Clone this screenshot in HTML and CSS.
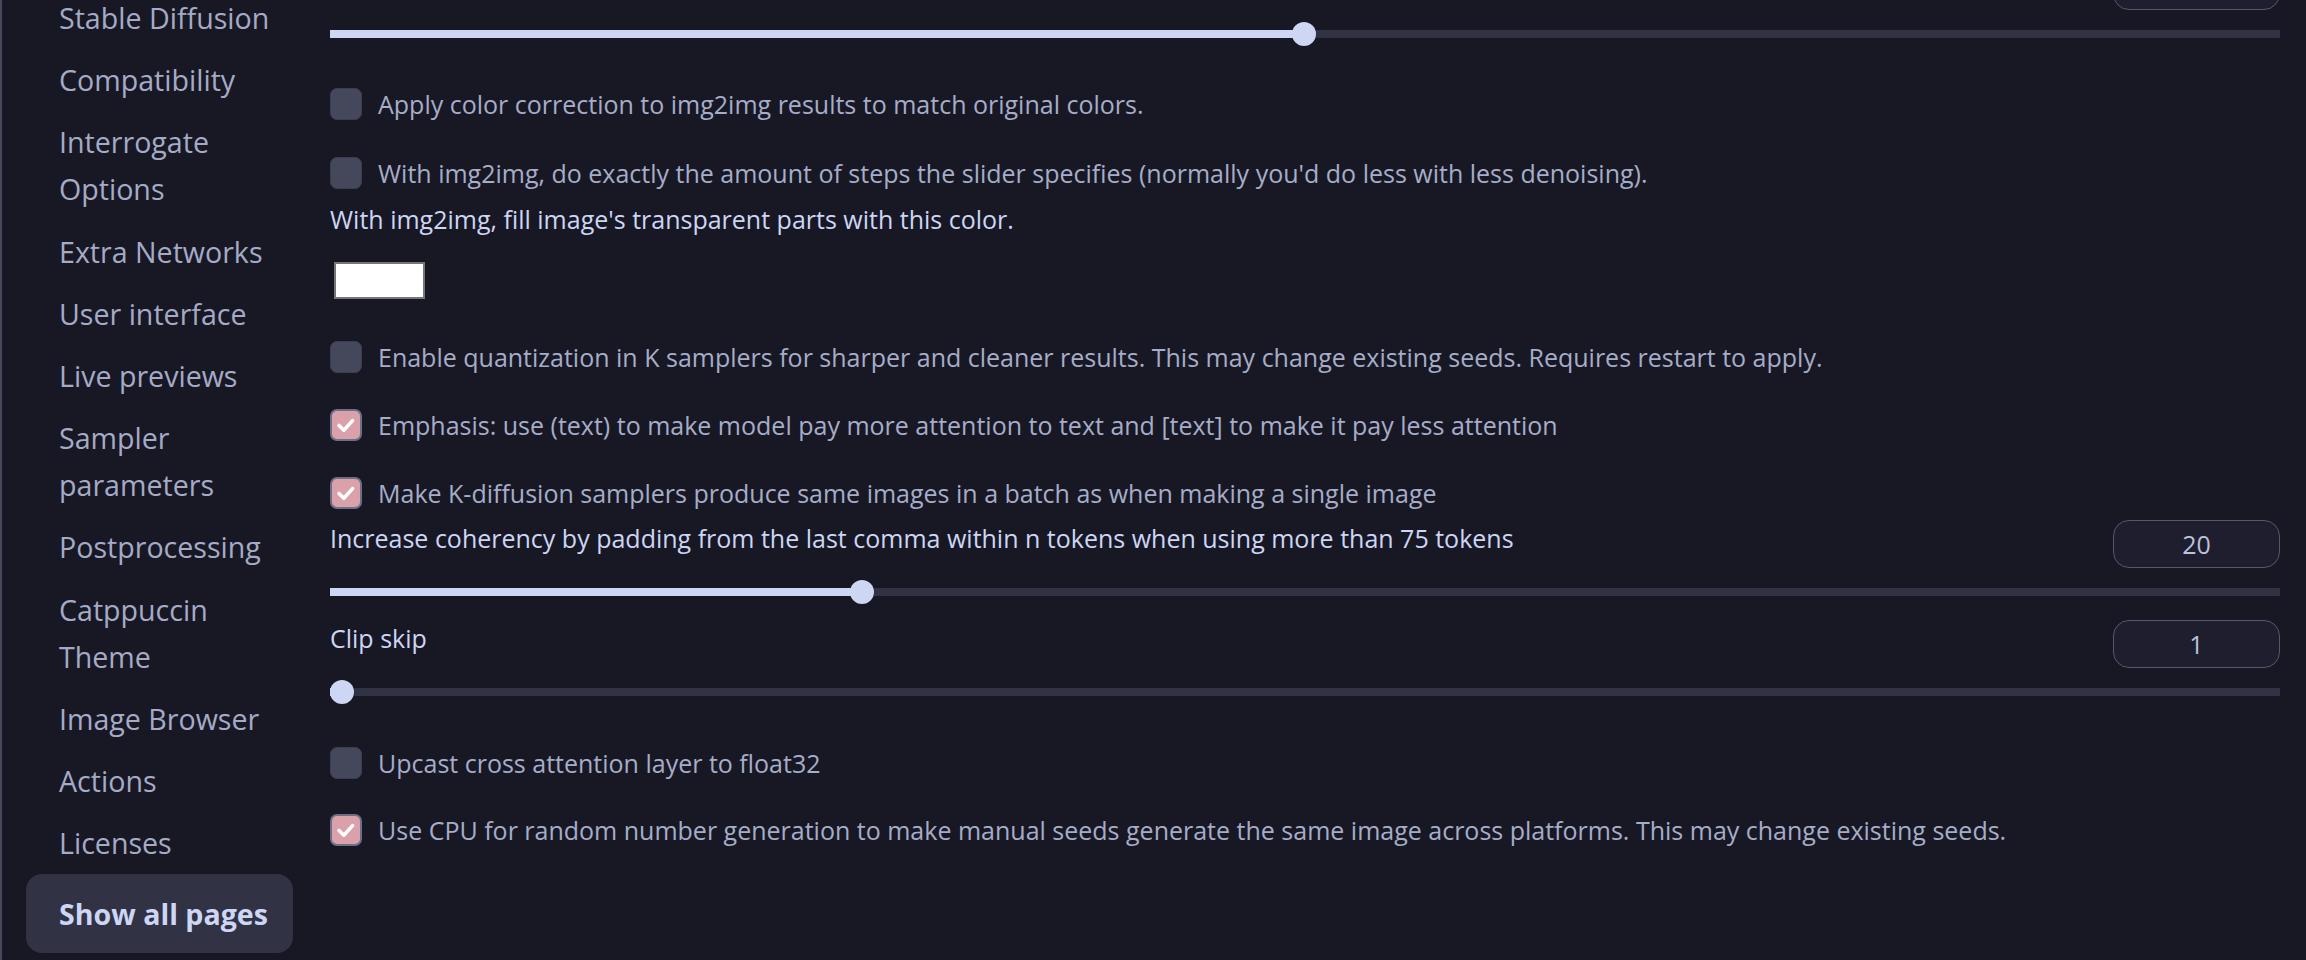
FILE: index.html
```html
<!DOCTYPE html>
<html lang="en">
<head>
<meta charset="utf-8">
<title>Settings</title>
<link rel="stylesheet" href="styles.css">
</head>
<body>
<div class="app">
  <nav class="sidebar">
    <ul class="nav-list">
      <li class="nav-item">Stable Diffusion</li>
      <li class="nav-item">Compatibility</li>
      <li class="nav-item">Interrogate Options</li>
      <li class="nav-item">Extra Networks</li>
      <li class="nav-item">User interface</li>
      <li class="nav-item">Live previews</li>
      <li class="nav-item">Sampler parameters</li>
      <li class="nav-item">Postprocessing</li>
      <li class="nav-item">Catppuccin Theme</li>
      <li class="nav-item">Image Browser</li>
      <li class="nav-item">Actions</li>
      <li class="nav-item">Licenses</li>
      <li class="nav-item nav-active">Show all pages</li>
    </ul>
  </nav>

  <main class="main">
    <div class="slider-block first">
      <div class="slider-head">
        <span class="label"></span>
        <div class="num-input"></div>
      </div>
      <div class="track"><div class="fill" style="width: 974px"></div><div class="thumb" style="left: 962px"></div></div>
    </div>

    <label class="check-row row-1"><span class="box"></span><span class="check-text">Apply color correction to img2img results to match original colors.</span></label>
    <label class="check-row row-2"><span class="box"></span><span class="check-text">With img2img, do exactly the amount of steps the slider specifies (normally you'd do less with less denoising).</span></label>

    <div class="label field-label">With img2img, fill image's transparent parts with this color.</div>
    <div class="swatch"></div>

    <label class="check-row row-3"><span class="box"></span><span class="check-text">Enable quantization in K samplers for sharper and cleaner results. This may change existing seeds. Requires restart to apply.</span></label>
    <label class="check-row row-n"><span class="box checked"><svg viewBox="0 0 32 32" class="tick"><path d="M8 16.5 L13.5 22 L23.5 11"/></svg></span><span class="check-text">Emphasis: use (text) to make model pay more attention to text and [text] to make it pay less attention</span></label>
    <label class="check-row row-n"><span class="box checked"><svg viewBox="0 0 32 32" class="tick"><path d="M8 16.5 L13.5 22 L23.5 11"/></svg></span><span class="check-text">Make K-diffusion samplers produce same images in a batch as when making a single image</span></label>

    <div class="slider-block s2">
      <div class="slider-head">
        <span class="label">Increase coherency by padding from the last comma within n tokens when using more than 75 tokens</span>
        <div class="num-input">20</div>
      </div>
      <div class="track"><div class="fill" style="width: 532px"></div><div class="thumb" style="left: 520px"></div></div>
    </div>

    <div class="slider-block s3">
      <div class="slider-head">
        <span class="label">Clip skip</span>
        <div class="num-input">1</div>
      </div>
      <div class="track"><div class="fill" style="width: 12px"></div><div class="thumb" style="left: 0px"></div></div>
    </div>

    <label class="check-row row-6"><span class="box"></span><span class="check-text">Upcast cross attention layer to float32</span></label>
    <label class="check-row row-7"><span class="box checked"><svg viewBox="0 0 32 32" class="tick"><path d="M8 16.5 L13.5 22 L23.5 11"/></svg></span><span class="check-text">Use CPU for random number generation to make manual seeds generate the same image across platforms. This may change existing seeds.</span></label>
  </main>
</div>
</body>
</html>
```

FILE: styles.css
```css
* { box-sizing: border-box; }

html, body {
  margin: 0;
  padding: 0;
  height: 960px;
  overflow: hidden;
  background: #181825;
}

body {
  font-family: "Open Sans", "Noto Sans", sans-serif;
  color: #a6adc8;
}

.app {
  display: flex;
  width: 2306px;
  height: 960px;
}

/* Sidebar */
.sidebar {
  width: 330px;
  flex: none;
  border-left: 2px solid #45475a;
  padding-left: 24px;
}

.nav-list {
  list-style: none;
  margin: -13.5px 0 0 0;
  padding: 0;
  width: 267px;
}

.nav-item {
  font-size: 28.6px;
  line-height: 47px;
  padding: 7.6px 8px 7.6px 33px;
  color: #a5abc6;
}

.nav-active {
  padding-top: 16px;
  padding-bottom: 16px;
  background: #313244;
  border-radius: 16px;
  font-weight: 700;
  color: #cdd6f4;
}

/* Main */
.main {
  width: 1950px;
  flex: none;
  display: flex;
  flex-direction: column;
  margin-top: -38px;
}

.label {
  font-size: 25px;
  color: #cdd6f4;
  line-height: 36px;
}

.slider-block {
  display: flex;
  flex-direction: column;
  gap: 12px;
}

.slider-block.s2 { margin-top: 11px; }
.slider-block.s3 { margin-top: 16px; }

.slider-head {
  display: flex;
  justify-content: space-between;
  align-items: flex-start;
  height: 48px;
}

.num-input {
  width: 167px;
  height: 48px;
  border: 1.5px solid #55576b;
  border-radius: 16px;
  background: #1e1e2e;
  color: #bac2de;
  font-size: 25px;
  display: flex;
  align-items: center;
  justify-content: center;
}

.track {
  position: relative;
  height: 24px;
  display: flex;
  align-items: center;
}

.track::before {
  content: "";
  position: absolute;
  left: 0;
  right: 0;
  top: 8px;
  height: 8px;
  background: #313244;
}

.fill {
  position: relative;
  height: 8px;
  background: #cdd6f3;
}

.thumb {
  position: absolute;
  top: 0;
  width: 24px;
  height: 24px;
  border-radius: 50%;
  background: #cdd6f3;
}

/* Checkbox rows */
.check-row {
  display: flex;
  align-items: center;
  gap: 16px;
  height: 32px;
  font-size: 25px;
  color: #a6adc8;
}

.row-1 { margin-top: 42px; }
.row-2 { margin-top: 37px; }
.row-n { margin-top: 36px; }
.row-3 { margin-top: 42px; }
.row-6 { margin-top: 43px; }
.row-7 { margin-top: 35px; }

.box {
  width: 32px;
  height: 32px;
  flex: none;
  border-radius: 7px;
  background: #45475a;
  border: 1.5px solid #3b3d50;
  display: flex;
  align-items: center;
  justify-content: center;
}

.box.checked {
  background: #dba1ab;
  border: 2px solid #6c7086;
}

.tick {
  width: 32px;
  height: 32px;
  fill: none;
  stroke: #ffffff;
  stroke-width: 4;
  stroke-linecap: round;
  stroke-linejoin: round;
}

.check-text { white-space: nowrap; }

.field-label { margin-top: 12px; }

.swatch {
  margin-top: 25px;
  margin-left: 4px;
  width: 91px;
  height: 37px;
  background: #ffffff;
  border: 2px solid #767676;
}
```
